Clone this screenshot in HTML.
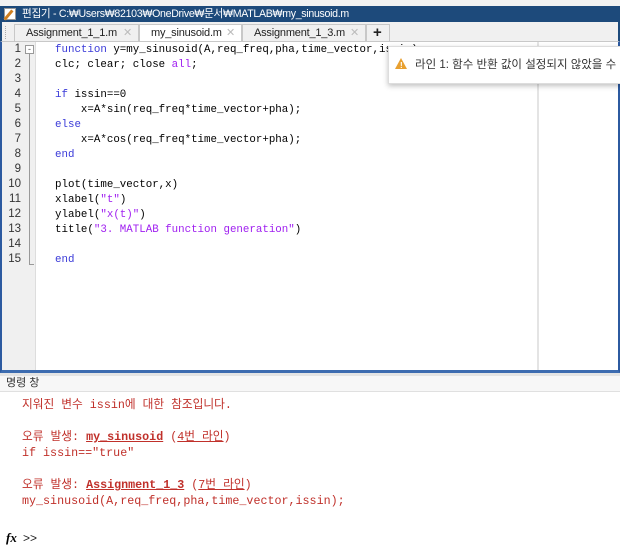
<!DOCTYPE html>
<html><head><meta charset="utf-8"><style>
*{margin:0;padding:0;box-sizing:border-box}
body{width:620px;height:543px;overflow:hidden;background:#fff;font-family:"Liberation Sans","Noto Sans CJK KR",sans-serif;position:relative}
.abs{position:absolute}
.mono{font-family:"Liberation Mono","Noto Sans CJK KR",monospace}
.code{font-size:10.8px;line-height:15px;white-space:pre;color:#000}
.kw{color:#3a3ad8}.st{color:#a020f0}
.tab{position:absolute;top:24px;height:17px;border:1px solid #c8c8c8;border-bottom:none;background:#f0f0f0;font-size:11px;line-height:16px;padding-left:11px;color:#222;letter-spacing:-0.2px}
.tab .x{position:absolute;right:6px;color:#bbb;font-size:11px}
.ln{position:absolute;left:0;width:21px;text-align:right;font-size:11.5px;color:#333;font-family:"Liberation Sans",sans-serif}
.cmd{font-size:11.7px;line-height:16px;white-space:pre;color:#c0302a}
</style></head><body>
<div class="abs" style="left:0;top:0;width:620px;height:6px;background:#f2f2f2"></div>
<div class="abs" style="left:0;top:6px;width:620px;height:16px;background:#1d4a7b;color:#fff;font-size:10.6px;line-height:16px;padding-left:22px;letter-spacing:-0.3px">편집기 - C:₩Users₩82103₩OneDrive₩문서₩MATLAB₩my_sinusoid.m</div>
<div class="abs" style="left:4px;top:8px;width:12px;height:12px;background:#fff;border:1px solid #999"></div>
<div class="abs" style="left:7px;top:9px;width:3px;height:12px;background:#d08020;transform:rotate(40deg)"></div>
<div class="abs" style="left:0;top:22px;width:620px;height:20px;background:#f0f0f0;border-left:2px solid #1d4a7b;border-right:2px solid #1d4a7b"></div>
<div class="abs" style="left:5px;top:26px;width:2px;height:13px;border-left:1px dotted #aaa"></div>
<div class="tab" style="left:14px;width:125px">Assignment_1_1.m<span class="x">✕</span></div>
<div class="tab" style="left:139px;width:103px;background:#fff;height:18px">my_sinusoid.m<span class="x">✕</span></div>
<div class="tab" style="left:242px;width:124px">Assignment_1_3.m<span class="x">✕</span></div>
<div class="tab" style="left:366px;width:24px;padding-left:6px;font-size:15px;font-weight:bold">+</div>
<div class="abs" style="left:0;top:41px;width:620px;height:332px;border:2px solid #2c5aa0;border-top:1px solid #c8c8c8;border-bottom:3px solid #3d6cb0;background:#fff"></div>
<div class="abs" style="left:2px;top:42px;width:34px;height:328px;background:#f0f0f0;border-right:1px solid #ddd"></div>
<div class="abs" style="left:537px;top:42px;width:2px;height:328px;background:#e4e4e4"></div>
<div class="abs" style="left:25px;top:45px;width:9px;height:9px;border:1px solid #999;background:#fff;font-size:9px;line-height:6px;text-align:center;color:#555">-</div>
<div class="abs" style="left:29px;top:54px;width:5px;height:211px;border-left:1px solid #999;border-bottom:1px solid #999"></div>
<div class="abs" style="top:43px;left:0">
<div class="ln" style="top:0">1</div><div class="ln" style="top:15px">2</div><div class="ln" style="top:30px">3</div><div class="ln" style="top:45px">4</div><div class="ln" style="top:60px">5</div><div class="ln" style="top:75px">6</div><div class="ln" style="top:90px">7</div><div class="ln" style="top:105px">8</div><div class="ln" style="top:120px">9</div><div class="ln" style="top:135px">10</div><div class="ln" style="top:150px">11</div><div class="ln" style="top:165px">12</div><div class="ln" style="top:180px">13</div><div class="ln" style="top:195px">14</div><div class="ln" style="top:210px">15</div>
</div>
<div class="abs mono code" style="left:55px;top:43px"><span class="kw">function</span> y=my_sinusoid(A,req_freq,pha,time_vector,issin)
clc; clear; close <span class="st">all</span>;

<span class="kw">if</span> issin==0
    x=A*sin(req_freq*time_vector+pha);
<span class="kw">else</span>
    x=A*cos(req_freq*time_vector+pha);
<span class="kw">end</span>

plot(time_vector,x)
xlabel(<span class="st">"t"</span>)
ylabel(<span class="st">"x(t)"</span>)
title(<span class="st">"3. MATLAB function generation"</span>)

<span class="kw">end</span></div>
<div class="abs" style="z-index:5;left:388px;top:46px;width:240px;height:38px;background:#fff;border:1px solid #ddd;box-shadow:0 2px 5px rgba(0,0,0,.25);font-size:11.5px;line-height:36px;padding-left:26px;color:#333;white-space:nowrap">라인 1: 함수 반환 값이 설정되지 않았을 수 있</div>
<div class="abs" style="z-index:6;left:395px;top:58px;width:0;height:0;border-left:6px solid transparent;border-right:6px solid transparent;border-bottom:11px solid #e8a030"></div>
<div class="abs" style="z-index:7;left:400px;top:61px;font-size:8px;color:#fff;font-weight:bold">!</div>
<div class="abs" style="left:0;top:373px;width:620px;height:3px;background:#e4e4e4"></div>
<div class="abs" style="left:0;top:376px;width:620px;height:16px;background:#f7f7f7;border-bottom:1px solid #e0e0e0;font-size:11px;line-height:15px;padding-left:6px;color:#333">명령 창</div>
<div class="abs mono cmd" style="left:22px;top:397px">지워진 변수 issin에 대한 참조입니다.

오류 발생: <b style="text-decoration:underline">my_sinusoid</b> (<u>4번 라인</u>)
if issin=="true"

오류 발생: <b style="text-decoration:underline">Assignment_1_3</b> (<u>7번 라인</u>)
my_sinusoid(A,req_freq,pha,time_vector,issin);</div>
<div class="abs" style="left:6px;top:530px;font-family:'Liberation Serif',serif;font-style:italic;font-weight:bold;font-size:13px">fx</div>
<div class="abs" style="left:23px;top:531px;font-size:12px;color:#222">&gt;&gt;</div>
</body></html>
